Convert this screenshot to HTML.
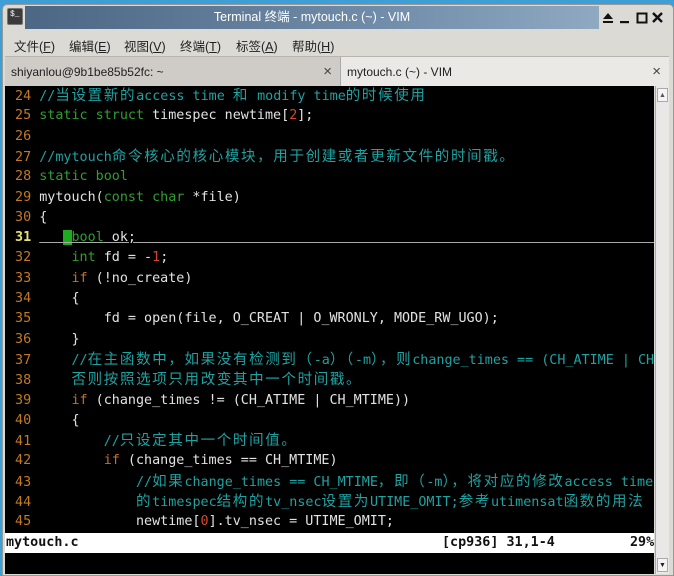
<!DOCTYPE html>
<html><head><meta charset="utf-8"><style>
*{margin:0;padding:0;box-sizing:border-box}
body{width:674px;height:576px;background:#3d9fd6;position:relative;overflow:hidden;font-family:"Liberation Sans","Noto Sans CJK SC",sans-serif}
#win{position:absolute;left:2px;top:4px;width:672px;height:572px;background:#dcdad5;border-radius:5px 5px 0 0;border:1px solid #9a9893}
#title{position:absolute;left:22px;top:1px;width:574px;height:23px;background:linear-gradient(90deg,#4c6784,#6f8ba8 60%,#8fa9c2);color:#fff;font-size:12.5px;text-align:center;line-height:23px}
#icon{position:absolute;left:4px;top:3px;width:16px;height:17px;background:#3a3a3a;border:1px solid #777;border-radius:2px;color:#fff;font:8px "Liberation Mono",monospace;line-height:12px;padding-left:2px}
.bt{position:absolute;top:0;height:24px}
#menu{position:absolute;top:26px;left:0;width:100%;height:26px;font-size:12.5px;color:#222}
#menu span{position:absolute;top:5px}
#tabs{position:absolute;top:51px;left:2px;width:664px;height:31px;border-top:1px solid #b8b5b0}
.tab{position:absolute;top:0;height:30px;font-size:12px;line-height:30px;color:#222;padding-left:6px}
.tab b{position:absolute;right:8px;top:0;font-weight:normal;font-size:15px;color:#444}
#term{position:absolute;overflow:hidden;background:#000;font-family:"DejaVu Sans Mono","Noto Sans CJK SC",monospace;font-size:13.4px;color:#e2e2e2}
.l{position:absolute;left:2px;white-space:pre;height:20.3px;line-height:20.3px}
.n{color:#c47a22}.k{color:#2f9f2f}.c{color:#1fa2a2}.o{color:#c27222}.r{color:#d04a2a}
.z{font-size:14.5px;letter-spacing:1.65px}
#sb{position:absolute;width:14px;background:#e9e8e6;border-left:1px solid #aaa}
</style></head><body>
<div id="win">
<div id="icon">$_</div>
<div id="title">Terminal 终端 - mytouch.c (~) - VIM</div>
<svg class="bt" style="left:596px" width="74" height="24" viewBox="0 0 74 24">
<path d="M4 14 L9 8 L14 14 Z" fill="#111"/><rect x="4" y="16" width="10" height="2" fill="#111"/>
<rect x="21" y="16" width="9" height="2.2" fill="#111"/>
<rect x="38.5" y="8.5" width="9" height="9" fill="none" stroke="#111" stroke-width="2"/>
<path d="M54 8 L63 17 M63 8 L54 17" stroke="#111" stroke-width="2.4"/>
</svg>
<div id="menu"><span style="left:11px">文件(<u>F</u>)</span><span style="left:66px">编辑(<u>E</u>)</span><span style="left:121px">视图(<u>V</u>)</span><span style="left:177px">终端(<u>T</u>)</span><span style="left:233px">标签(<u>A</u>)</span><span style="left:289px">帮助(<u>H</u>)</span></div>
<div id="tabs">
<div class="tab" style="left:0;width:336px;background:#cfccc7;border-right:1px solid #aaa">shiyanlou@9b1be85b52fc: ~<b>×</b></div>
<div class="tab" style="left:336px;width:328px;background:#ebe9e6">mytouch.c (~) - VIM<b>×</b></div>
</div>
</div>
<div id="term" style="left:5px;top:86px;width:649px;height:488px">
<div class="l" style="top:0"><span class="n"> 24 </span><span class="c">//<span class="z">当设置新的</span>access time <span class="z">和</span> modify time<span class="z">的时候使用</span></span></div>
<div class="l" style="top:20.3px"><span class="n"> 25 </span><span class="k">static struct</span> timespec newtime[<span class="r">2</span>];</div>
<div class="l" style="top:40.6px"><span class="n"> 26 </span></div>
<div class="l" style="top:60.9px"><span class="n"> 27 </span><span class="c">//mytouch<span class="z">命令核心的核心模块，用于创建或者更新文件的时间戳。</span></span></div>
<div class="l" style="top:81.2px"><span class="n"> 28 </span><span class="k">static bool</span></div>
<div class="l" style="top:101.5px"><span class="n"> 29 </span>mytouch(<span class="k">const char</span> *file)</div>
<div class="l" style="top:121.8px"><span class="n"> 30 </span>{</div>
<div class="l" style="top:142.1px;width:660px"><span style="color:#e8e070;font-weight:bold"> 31 </span><span style="text-decoration:underline;text-decoration-color:#aaa">   <span style="background:#1faa1f;color:#1faa1f">X</span><span class="k">bool</span> ok;                                                                              </span></div>
<div class="l" style="top:162.4px"><span class="n"> 32 </span>    <span class="k">int</span> fd = -<span class="r">1</span>;</div>
<div class="l" style="top:182.7px"><span class="n"> 33 </span>    <span class="o">if</span> (!no_create)</div>
<div class="l" style="top:203px"><span class="n"> 34 </span>    {</div>
<div class="l" style="top:223.3px"><span class="n"> 35 </span>        fd = open(file, O_CREAT | O_WRONLY, MODE_RW_UGO);</div>
<div class="l" style="top:243.6px"><span class="n"> 36 </span>    }</div>
<div class="l" style="top:263.9px"><span class="n"> 37 </span>    <span class="c">//<span class="z">在主函数中，如果没有检测到（</span>-a<span class="z">）（</span>-m<span class="z">），则</span>change_times == (CH_ATIME | CH_MTIME)</span></div>
<div class="l" style="top:284.2px"><span class="n"> 38 </span>    <span class="c"><span class="z">否则按照选项只用改变其中一个时间戳。</span></span></div>
<div class="l" style="top:304.5px"><span class="n"> 39 </span>    <span class="o">if</span> (change_times != (CH_ATIME | CH_MTIME))</div>
<div class="l" style="top:324.8px"><span class="n"> 40 </span>    {</div>
<div class="l" style="top:345.1px"><span class="n"> 41 </span>        <span class="c">//<span class="z">只设定其中一个时间值。</span></span></div>
<div class="l" style="top:365.4px"><span class="n"> 42 </span>        <span class="o">if</span> (change_times == CH_MTIME)</div>
<div class="l" style="top:385.7px"><span class="n"> 43 </span>            <span class="c">//<span class="z">如果</span>change_times == CH_MTIME<span class="z">，即（</span>-m<span class="z">），将对应的修改</span>access time</span></div>
<div class="l" style="top:406px"><span class="n"> 44 </span>            <span class="c"><span class="z">的</span>timespec<span class="z">结构的</span>tv_nsec<span class="z">设置为</span>UTIME_OMIT;<span class="z">参考</span>utimensat<span class="z">函数的用法</span></span></div>
<div class="l" style="top:426.3px"><span class="n"> 45 </span>            newtime[<span class="r">0</span>].tv_nsec = UTIME_OMIT;</div>
<div style="position:absolute;left:0;top:446.5px;width:649px;height:20px;background:#fff;color:#111;font-weight:bold"><span class="l" style="left:1px;top:0;line-height:20px">mytouch.c</span><span class="l" style="left:437px;top:0;line-height:20px">[cp936] 31,1-4</span><span class="l" style="left:625px;top:0;line-height:20px">29%</span></div>
</div>
<div id="sb" style="left:655px;top:86px;height:488px">
<div style="position:absolute;left:1px;top:2px;width:11px;height:14px;border:1px solid #aaa;background:#f4f4f4;font-size:7px;text-align:center;line-height:13px;color:#555">▲</div>
<div style="position:absolute;left:1px;bottom:2px;width:11px;height:14px;border:1px solid #aaa;background:#f4f4f4;font-size:7px;text-align:center;line-height:13px;color:#222">▼</div>
</div>
</body></html>
